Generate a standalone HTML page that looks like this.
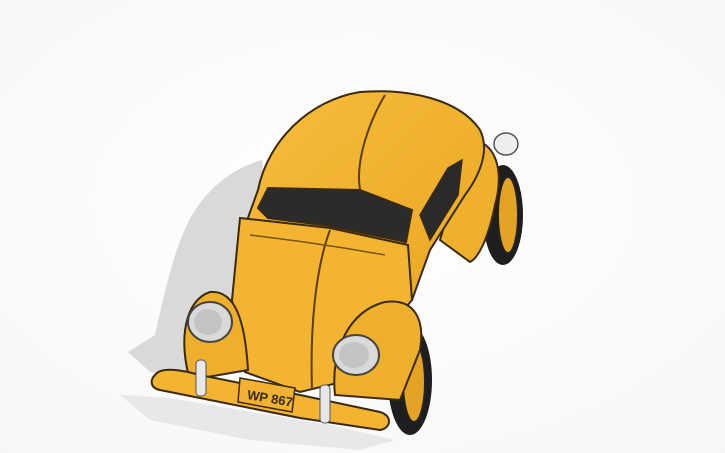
<!DOCTYPE html>
<html><head><style>
html,body{margin:0;padding:0;width:725px;height:453px;overflow:hidden;background:#fff;}
</style></head><body>
<svg width="725" height="453" viewBox="0 0 725 453" xmlns="http://www.w3.org/2000/svg">
<defs>
<radialGradient id="bg" cx="50%" cy="45%" r="80%">
<stop offset="0%" stop-color="#ffffff"/><stop offset="100%" stop-color="#f6f6f6"/>
</radialGradient>
<linearGradient id="roof" x1="0" y1="0" x2="1" y2="1">
<stop offset="0" stop-color="#f7bd3c"/><stop offset="1" stop-color="#e9a722"/>
</linearGradient>
</defs>
<rect width="725" height="453" fill="url(#bg)"/>
<!-- shadows -->
<path d="M262,160 C235,168 210,185 192,215 C175,245 165,290 155,335 L128,352 L150,372 L190,378 L230,360 L250,260 L268,205 Z" fill="#d9d9d9"/>
<polygon points="120,395 170,398 240,410 330,425 395,440 360,450 250,440 150,420" fill="#e8e8e8"/>
<!-- rear wheel -->
<ellipse cx="503" cy="215" rx="20" ry="50" fill="#1e1e1e"/>
<ellipse cx="508" cy="215" rx="10" ry="38" fill="#e5a324" stroke="#222" stroke-width="2"/>
<!-- rear light -->
<ellipse cx="506" cy="144" rx="12" ry="11" fill="#eeeeee" stroke="#555" stroke-width="1.5"/>
<!-- body rear fender -->
<path d="M470,140 C495,140 505,170 495,205 C488,240 478,258 470,262 L440,240 Z" fill="#efb02e" stroke="#3a2a10" stroke-width="2"/>
<!-- main body -->
<path d="M258,190 C268,140 310,100 360,92 C410,88 460,100 480,130 C490,150 480,175 465,195 L430,250 L412,300 L380,320 L300,300 L240,240 Z" fill="url(#roof)" stroke="#3a2a10" stroke-width="2"/>
<path d="M385,95 C370,120 355,160 360,190" fill="none" stroke="#5a3d10" stroke-width="2"/>
<!-- side windows -->
<polygon points="420,215 448,168 462,160 458,195 430,240" fill="#2a2a2a" stroke="#3a2a10" stroke-width="1.5"/>
<!-- windshield -->
<polygon points="258,208 268,188 360,190 412,210 406,242 330,226 268,218" fill="#2b2b2b" stroke="#3a2a10" stroke-width="2"/>
<!-- hood -->
<path d="M240,218 L330,228 L408,245 L412,300 C395,320 375,345 350,380 L300,392 L245,372 L232,300 Z" fill="#f2b431" stroke="#3a2a10" stroke-width="2"/>
<path d="M330,230 C315,270 310,330 312,390" fill="none" stroke="#5a3d10" stroke-width="2"/>
<path d="M250,235 C290,240 330,245 385,255" fill="none" stroke="#7a5210" stroke-width="1.5"/>
<!-- right front wheel -->
<ellipse cx="410" cy="380" rx="22" ry="55" fill="#1e1e1e"/>
<ellipse cx="414" cy="382" rx="11" ry="40" fill="#e5a324" stroke="#222" stroke-width="2"/>
<!-- left fender -->
<path d="M190,380 C178,340 185,300 210,292 C235,290 245,320 248,370 Z" fill="#eeaf2c" stroke="#3a2a10" stroke-width="2"/>
<ellipse cx="210" cy="322" rx="22" ry="20" fill="#d9d9d9" stroke="#444" stroke-width="2"/>
<ellipse cx="208" cy="322" rx="14" ry="13" fill="#c4c4c4"/>
<!-- right fender -->
<path d="M335,395 C330,350 350,310 385,302 C415,298 425,320 420,350 L400,400 Z" fill="#eeaf2c" stroke="#3a2a10" stroke-width="2"/>
<ellipse cx="356" cy="355" rx="23" ry="20" fill="#d9d9d9" stroke="#444" stroke-width="2"/>
<ellipse cx="354" cy="355" rx="15" ry="13" fill="#c4c4c4"/>
<!-- bumper -->
<path d="M155,375 C160,368 175,368 200,375 L300,395 L380,412 C392,415 392,428 380,430 L300,418 L200,398 L160,390 C150,388 150,380 155,375 Z" fill="#f2b431" stroke="#3a2a10" stroke-width="2"/>
<rect x="196" y="360" width="10" height="36" rx="4" fill="#e8e8e8" stroke="#555"/>
<rect x="320" y="385" width="10" height="38" rx="4" fill="#e8e8e8" stroke="#555"/>
<!-- plate -->
<polygon points="240,378 295,388 292,412 238,402" fill="#f0b230" stroke="#3a2a10" stroke-width="1.5"/>
<text x="247" y="402" font-family="Liberation Sans, sans-serif" font-size="13" font-weight="bold" fill="#3a2a10" transform="rotate(10 265 398)">WP 867</text>
</svg>
</body></html>
